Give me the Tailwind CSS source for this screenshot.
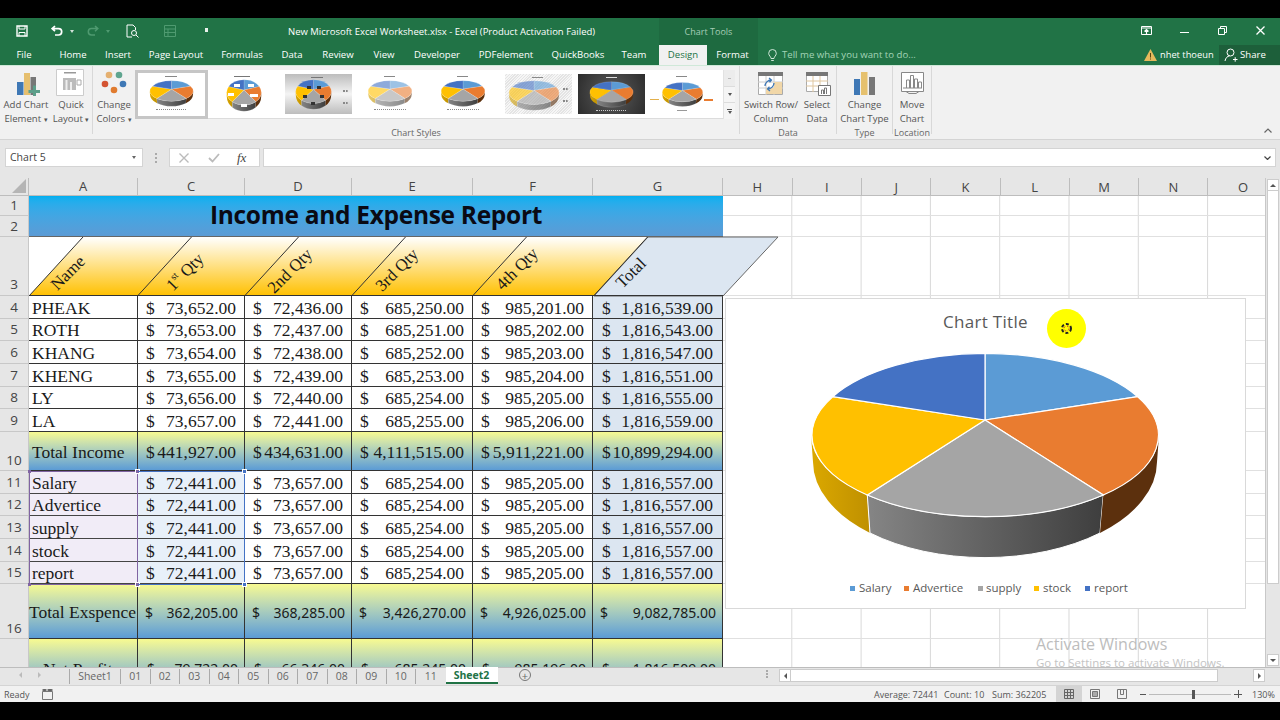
<!DOCTYPE html>
<html lang="en">
<head>
    <meta charset="UTF-8">
    <title>New Microsoft Excel Worksheet.xlsx - Excel</title>
    <script src="https://cdn.jsdelivr.net/npm/@tailwindcss/browser@4"></script>
</head>
<body class="w-[1280px] h-[720px] bg-black overflow-hidden font-['Open_Sans',sans-serif] text-[9.600px] text-[#444]">
    <!-- shared pie drawing, used by the chart and the gallery -->
    <svg class="absolute w-0 h-0">
        <defs>
            <linearGradient id="sideGray" x1="0" x2="1" y1="0" y2="0"><stop offset="0" stop-color="#858585"/><stop offset="1" stop-color="#3e3e3e"/></linearGradient>
            <linearGradient id="sideYellow" x1="0" x2="1" y1="0" y2="0"><stop offset="0" stop-color="#dba800"/><stop offset="1" stop-color="#bf9000"/></linearGradient>
            <linearGradient id="headGold" x1="0" x2="0" y1="0" y2="1"><stop offset="0" stop-color="#ffffff"/><stop offset="1" stop-color="#ffc000"/></linearGradient>
            <g id="pieShape">
                <path fill="url(#sideYellow)" d="M811 435 A174 81.7 0 0 0 867.3 495 L870 533 A172 96 0 0 1 813 462 Z"/>
                <path fill="url(#sideGray)" stroke="#fff" d="M867.3 495 A174 81.7 0 0 0 1103.3 495 L1100 533 A172 96 0 0 1 870 533 Z"/>
                <path fill="#5c300d" d="M1159 435 A174 81.7 0 0 1 1103.3 495 L1100 533 A172 96 0 0 0 1157 462 Z"/>
                <g stroke="#fff" stroke-width="1.2">
                    <path fill="#5b9bd5" d="M985 420 L985 353.3 A174 81.7 0 0 1 1137.7 396.7 Z"/>
                    <path fill="#e97c30" d="M985 420 L1137.7 396.7 A174 81.7 0 0 1 1103.3 495 Z"/>
                    <path fill="#a5a5a5" d="M985 420 L1103.3 495 A174 81.7 0 0 1 867.3 495 Z"/>
                    <path fill="#ffc000" d="M985 420 L867.3 495 A174 81.7 0 0 1 832.7 396.7 Z"/>
                    <path fill="#4472c4" d="M985 420 L832.7 396.7 A174 81.7 0 0 1 985 353.3 Z"/>
                </g>
            </g>
            <symbol id="pie" viewBox="805 348 360 214"><use href="#pieShape"/></symbol>
            <symbol id="pieTall" viewBox="805 348 360 214" preserveAspectRatio="none"><use href="#pieShape"/></symbol>
        </defs>
    </svg>

    <div class="h-[18px]"></div>

    <!-- Title bar -->
    <div class="relative flex items-center h-[27px] bg-[#217346] text-white">
        <svg class="absolute left-[16px] top-[7px] w-[12px] h-[12px]" viewBox="0 0 12 12" fill="none" stroke="#fff" stroke-width="1.4"><path d="M1 1h10v10H1z"/><path d="M3 1v3h6V1M3 11V7.5h6V11" stroke-width="1"/></svg>
        <svg class="absolute left-[51px] top-[7px] w-[12px] h-[12px]" viewBox="0 0 12 12" fill="none" stroke="#fff" stroke-width="1.7"><path d="M4 1 1.2 3.6 4 6.2M1.500 3.600h6a3 3 0 0 1 0 6.400H4"/></svg>
        <span class="absolute left-[70px] top-[12px] border-x-[2.500px] border-t-[3px] border-x-transparent border-t-white/80"></span>
        <svg class="absolute left-[87px] top-[7px] w-[12px] h-[12px]" viewBox="0 0 12 12" fill="none" stroke="#4f9a70" stroke-width="1.5"><path d="M8 1l2.800 2.600L8 6.200M10.500 3.600h-6a3 3 0 0 0 0 6.400H8"/></svg>
        <span class="absolute left-[106px] top-[12px] border-x-[2.500px] border-t-[3px] border-x-transparent border-t-[#4f9a70]"></span>
        <svg class="absolute left-[126px] top-[6px] w-[13px] h-[14px]" viewBox="0 0 13 14" fill="none" stroke="#fff" stroke-width="1"><path d="M1 13V1h6l2.500 2.500V6M1 13h5"/><circle cx="8" cy="9" r="2.500"/><path d="M10 11l2.500 2.500"/></svg>
        <svg class="absolute left-[164px] top-[7px] w-[12px] h-[12px]" viewBox="0 0 12 12" fill="none" stroke="#4f9a70"><path d="M.5.5h11v11H.5zM.5 4h11M.5 7.500h11M4 4v7.500"/></svg>
        <span class="absolute left-[205px] top-[10px] w-[3px] h-[4px] bg-white/90"></span>
        <span class="absolute left-[288px] top-[6px] text-[9.500px] leading-[15px]">New Microsoft Excel Worksheet.xlsx - Excel (Product Activation Failed)</span>
        <div class="absolute left-[659px] top-0 w-[99px] h-[27px] bg-[#1e6a40] text-center text-[9px] leading-[27px] text-[#a6cdb6]">Chart Tools</div>
        <svg class="absolute left-[1141px] top-[7px] w-[11px] h-[11px]" viewBox="0 0 11 11" fill="none" stroke="#fff"><path d="M.5 1.500h10v8H.5zM.5 3h10"/><path d="M5.500 9V4.500M3.500 6.500l2-2 2 2" stroke-width="1.200"/></svg>
        <span class="absolute left-[1180px] top-[14px] w-[9px] h-px bg-white"></span>
        <svg class="absolute left-[1218px] top-[8px] w-[9px] h-[9px]" viewBox="0 0 9 9" fill="none" stroke="#fff"><path d="M.5 2.500h6v6h-6zM2.500 2.500V.5h6v6h-2"/></svg>
        <svg class="absolute left-[1256px] top-[8px] w-[9px] h-[9px]" viewBox="0 0 9 9" fill="none" stroke="#fff" stroke-width="1.300"><path d="M.5.5l8 8M8.500.5l-8 8"/></svg>
    </div>

    <!-- Ribbon tabs -->
    <div class="flex items-stretch h-[20px] bg-[#217346] text-white text-[9.600px] leading-[20px] text-center">
        <div class="w-[48px]">File</div>
        <div class="w-[50px]">Home</div>
        <div class="w-[40px]">Insert</div>
        <div class="w-[76px]">Page Layout</div>
        <div class="w-[56px]">Formulas</div>
        <div class="w-[44px]">Data</div>
        <div class="w-[48px]">Review</div>
        <div class="w-[44px]">View</div>
        <div class="w-[62px]">Developer</div>
        <div class="w-[76px]">PDFelement</div>
        <div class="w-[68px]">QuickBooks</div>
        <div class="w-[44px]">Team</div>
        <div class="w-[3px]"></div>
        <div class="w-[48px] bg-[#f1f1f1] text-[#217346]">Design</div>
        <div class="w-[51px] bg-[#1e6a40]">Format</div>
        <div class="flex items-center w-[386px] pl-[10px] text-[#a3d3b6] text-left">
            <svg class="w-[9px] h-[13px] mr-[5px]" viewBox="0 0 9 13" fill="none" stroke="#cfe6d8"><path d="M3 9.500C3 7.500 .7 6.800.7 4.300a3.800 3.800 0 0 1 7.600 0C8.300 6.800 6 7.500 6 9.500zM3.200 11.500h2.600"/></svg>
            <span>Tell me what you want to do...</span>
        </div>
        <div class="flex items-center w-[75px] text-[9.300px]">
            <svg class="w-[13px] h-[12px] mr-[3px]" viewBox="0 0 13 12"><path fill="#e6b95c" d="M6.500 0 13 12H0z"/><path fill="#5a4410" d="M6 4h1v4.500H6zM6 9.500h1v1H6z"/></svg>
            <span>nhet thoeun</span>
        </div>
        <div class="flex items-center flex-1 pl-[5px] bg-[#1d5f3a]">
            <svg class="w-[14px] h-[14px] mr-[2px]" viewBox="0 0 14 14" fill="none" stroke="#fff"><circle cx="6.500" cy="4.500" r="3.500"/><path d="M1 13c.5-3 2.500-5 4.500-5M9 11.500h4.500M11.200 9.200v4.500"/></svg>
            <span>Share</span>
        </div>
    </div>

    <!-- Ribbon -->
    <div class="relative flex h-[74px] bg-[#f1f1f1] border-t border-[#cfe8d8] text-[9.600px] leading-[13.500px] text-center text-[#555]">
        <div class="relative w-[93px] h-[68px] border-r border-[#d8d8d8]">
            <svg class="absolute left-[16px] top-[6px] w-[24px] h-[24px]" viewBox="0 0 24 24"><path fill="#3f78b5" d="M1 10h6.500v13H1z"/><path fill="#e6bf6e" d="M8 1h6v22H8z"/><path fill="#777" d="M14.500 5H20v18h-5.500z"/><path fill="#5c9f8a" d="M17 13.500h3V18h4.500v3H20v3h-3v-3h-4.500v-3H17z"/></svg>
            <div class="absolute left-0 top-[32px] w-[52px]">Add Chart<br>Element <span class="text-[7px]">▾</span></div>
            <svg class="absolute left-[56px] top-[3px] w-[28px] h-[27px]" viewBox="0 0 28 27"><path fill="#fff" stroke="#ccc" d="M.5.5h27v26H.5z"/><path fill="#999" d="M8 3h12v1.500H8z"/><path fill="#bbb" d="M7 9h13v12H7z"/><path fill="#eee" d="M9.500 11h2v10h-2zM14 13h2v8h-2z"/><path fill="none" stroke="#aaa" d="M21 11h4v5h-4z"/></svg>
            <div class="absolute left-[49px] top-[32px] w-[44px] whitespace-nowrap">Quick<br>Layout <span class="text-[7px]">▾</span></div>
        </div>
        <div class="relative w-[647px] h-[68px] border-r border-[#d8d8d8]">
            <svg class="absolute left-[8px] top-[4px] w-[26px] h-[26px]" viewBox="0 0 26 26"><circle cx="8" cy="5" r="3.300" fill="#e5b070"/><circle cx="18" cy="5" r="3.300" fill="#5fa58f"/><circle cx="4" cy="14" r="3.300" fill="#d45433"/><circle cx="22" cy="14" r="3.300" fill="#3f78b5"/><circle cx="13" cy="20" r="3.300" fill="#e07b2f"/></svg>
            <div class="absolute left-[0px] top-[32px] w-[42px] whitespace-nowrap">Change<br>Colors <span class="text-[7px]">▾</span></div>
            <!-- Gallery -->
            <div class="absolute left-[42px] top-[4px] flex h-[49px] w-[600px] bg-white border-b border-[#dcdcdc]">
                <div class="relative w-[73px] h-[49px] border-[3px] border-[#c6c6c6]">
                    <div class="absolute left-[27px] top-[3px] w-[12px] h-px bg-[#888]"></div>
                    <svg class="absolute left-[11px] top-[7px] w-[45px] h-[27px]"><use href="#pie"/></svg>
                    <div class="absolute left-[18px] top-[36px] w-[30px] h-px border-t border-dotted border-[#888]"></div>
                </div>
                <div class="relative w-[73px] h-[49px]">
                    <div class="absolute left-[26px] top-[6px] w-[16px] h-px bg-[#777]"></div>
                    <svg class="absolute left-[18px] top-[9px] w-[36px] h-[33px]"><use href="#pieTall"/></svg>
                    <div class="absolute left-[26px] top-[14px] w-[6px] h-[3px] bg-white"></div>
                    <div class="absolute left-[40px] top-[14px] w-[6px] h-[3px] bg-white"></div>
                    <div class="absolute left-[42px] top-[24px] w-[8px] h-[3px] bg-white"></div>
                    <div class="absolute left-[20px] top-[23px] w-[6px] h-[3px] bg-white"></div>
                    <div class="absolute left-[33px] top-[34px] w-[6px] h-[3px] bg-white"></div>
                </div>
                <div class="relative w-[67px] h-[40px] mt-[4px] mb-[4px] ml-[4px] mr-[2px] bg-gradient-to-b from-[#bdbdbd] via-[#f4f4f4] to-[#bdbdbd]">
                    <div class="absolute left-[26px] top-[3px] w-[12px] h-px bg-[#777]"></div>
                    <svg class="absolute left-[10px] top-[5px] w-[37px] h-[31px]"><use href="#pieTall"/></svg>
                    <div class="absolute left-[22px] top-[12px] w-[4px] h-[3px] bg-[#333]"></div>
                    <div class="absolute left-[32px] top-[12px] w-[4px] h-[3px] bg-[#333]"></div>
                    <div class="absolute left-[35px] top-[21px] w-[4px] h-[3px] bg-[#333]"></div>
                    <div class="absolute left-[18px] top-[21px] w-[4px] h-[3px] bg-[#333]"></div>
                    <div class="absolute left-[26px] top-[28px] w-[4px] h-[3px] bg-[#333]"></div>
                    <div class="absolute left-[58px] top-[16px] w-[5px] h-[14px] border-y-2 border-dotted border-[#888]"></div>
                </div>
                <div class="relative w-[73px] h-[49px]">
                    <div class="absolute left-[30px] top-[6px] w-[11px] h-px bg-[#888]"></div>
                    <svg class="absolute left-[13px] top-[10px] w-[46px] h-[27px] opacity-60"><use href="#pie"/></svg>
                    <div class="absolute left-[20px] top-[39px] w-[32px] h-px border-t border-dotted border-[#888]"></div>
                </div>
                <div class="relative w-[73px] h-[49px]">
                    <div class="absolute left-[30px] top-[6px] w-[11px] h-px bg-[#888]"></div>
                    <svg class="absolute left-[13px] top-[10px] w-[46px] h-[27px]"><use href="#pie"/></svg>
                    <div class="absolute left-[20px] top-[39px] w-[32px] h-px border-t border-dotted border-[#888]"></div>
                </div>
                <div class="relative w-[67px] h-[40px] mt-[4px] mb-[4px] ml-[5px] mr-[1px] bg-[repeating-linear-gradient(135deg,#f6f6f6_0_1px,#e4e4e4_1px_2px)]">
                    <div class="absolute left-[27px] top-[3px] w-[11px] h-px bg-[#888]"></div>
                    <svg class="absolute left-[3px] top-[6px] w-[52px] h-[31px] opacity-60"><use href="#pie"/></svg>
                    <div class="absolute left-[58px] top-[14px] w-[5px] h-[14px] border-y-2 border-dotted border-[#888]"></div>
                </div>
                <div class="relative w-[67px] h-[40px] mt-[4px] mb-[4px] ml-[5px] mr-[1px] bg-[radial-gradient(circle,#5c5c5c,#2c2c2c)]">
                    <div class="absolute left-[28px] top-[3px] w-[11px] h-px bg-[#ddd]"></div>
                    <svg class="absolute left-[11px] top-[7px] w-[45px] h-[27px]"><use href="#pie"/></svg>
                    <div class="absolute left-[18px] top-[36px] w-[30px] h-px border-t border-dotted border-[#ccc]"></div>
                </div>
                <div class="relative w-[73px] h-[49px]">
                    <div class="absolute left-[30px] top-[6px] w-[11px] h-px bg-[#888]"></div>
                    <svg class="absolute left-[15px] top-[12px] w-[43px] h-[25px]"><use href="#pie"/></svg>
                    <div class="absolute left-[4px] top-[29px] w-[9px] h-px bg-[#e3b04b]"></div>
                    <div class="absolute left-[58px] top-[29px] w-[9px] h-[2px] bg-[#e97c30]"></div>
                    <div class="absolute left-[31px] top-[40px] w-[10px] h-px bg-[#999]"></div>
                </div>
                <div class="flex flex-col ml-auto w-[12px] h-[49px] border-l border-[#e2e2e2] bg-[#f5f5f5] text-[#666]">
                    <div class="h-[17px] border-b border-[#dcdcdc] flex items-center justify-center bg-[#ececec]"><span class="w-[3px] h-px bg-[#bbb]"></span></div>
                    <div class="h-[16px] border-b border-[#dcdcdc] flex items-center justify-center"><span class="border-x-[2.500px] border-t-[3px] border-x-transparent border-t-[#555]"></span></div>
                    <div class="h-[16px] flex flex-col items-center justify-center"><span class="w-[5px] h-px bg-[#555] mb-px"></span><span class="border-x-[2.500px] border-t-[3px] border-x-transparent border-t-[#555]"></span></div>
                </div>
            </div>
            <div class="absolute inset-x-0 top-[60px] text-[9px] leading-[13px] text-[#666]">Chart Styles</div>
        </div>
        <div class="relative w-[97px] h-[68px] border-r border-[#d8d8d8]">
            <svg class="absolute left-[18px] top-[6px] w-[25px] h-[23px]" viewBox="0 0 25 23"><path fill="#fff" stroke="#aaa" d="M.5.5h24v22H.5z"/><path fill="#777" d="M0 0h25v4H0z"/><path stroke="#ccc" fill="none" d="M0 10h25M0 16h25M8 4v19M16 4v19"/><path fill="#f1d7a8" d="M16 10h8v12h-8zM8 16h8v6H8z"/><path fill="none" stroke="#3f78b5" stroke-width="1.300" d="M7 14c0-3 3-6 6-6M11 6l2.500 2-2 2.300M16 11c0 3-3 6-6 6M12 19l-2.500-2 2-2.300"/></svg>
            <div class="absolute left-[1px] top-[32px] w-[60px] whitespace-nowrap">Switch Row/<br>Column</div>
            <svg class="absolute left-[66px] top-[6px] w-[25px] h-[24px]" viewBox="0 0 25 24"><path fill="#fff" stroke="#aaa" d="M.5.5h21v19H.5z"/><path fill="#777" d="M0 0h22v4H0z"/><path stroke="#e0c7a0" fill="none" d="M0 9h22M0 14h22M7 4v16M14 4v16"/><path fill="#fff" stroke="#777" d="M12.500 13.500h12v10h-12z"/><path fill="none" stroke="#777" d="M15.500 22v-4h2v4M18.500 22v-6h2v6"/></svg>
            <div class="absolute left-[62px] top-[32px] w-[30px]">Select<br>Data</div>
            <div class="absolute inset-x-0 top-[60px] text-[9px] leading-[13px] text-[#666]">Data</div>
        </div>
        <div class="relative w-[56px] h-[68px] border-r border-[#d8d8d8]">
            <svg class="absolute left-[17px] top-[6px] w-[21px] h-[23px]" viewBox="0 0 21 23"><path fill="#3f78b5" d="M0 7h6v16H0z"/><path fill="#e6c16e" d="M7 0h6.500v23H7z"/><path fill="#777" d="M15 5h6v18h-6z"/></svg>
            <div class="absolute inset-x-0 top-[32px] whitespace-nowrap">Change<br>Chart Type</div>
            <div class="absolute inset-x-0 top-[60px] text-[9px] leading-[13px] text-[#666]">Type</div>
        </div>
        <div class="relative w-[39px] h-[68px] border-r border-[#d8d8d8]">
            <svg class="absolute left-[8px] top-[6px] w-[23px] h-[22px]" viewBox="0 0 23 22" fill="none" stroke="#888"><path fill="#fff" d="M.5.5h22v19H.5z"/><path d="M5.500 16V8h3v8M9.500 16V3.500h3V16M13.500 16V7h3v9M17.500 16v-6h3v6M2 16h19M5 19.500l3 2h7l3-2"/></svg>
            <div class="absolute inset-x-0 top-[32px]">Move<br>Chart</div>
            <div class="absolute inset-x-0 top-[60px] text-[9px] leading-[13px] text-[#666]">Location</div>
        </div>
        <svg class="absolute left-[1264px] top-[62px] w-[8px] h-[5px]" viewBox="0 0 8 5" fill="none" stroke="#666" stroke-width="1.200"><path d="M.5 4.500 4 1l3.500 3.500"/></svg>
    </div>

    <!-- Formula bar -->
    <div class="flex items-start h-[39px] pt-[8px] bg-[#e6e6e6] border-t border-[#d4d4d4]">
        <div class="flex items-center justify-between w-[138px] h-[19px] ml-[5px] px-[4px] bg-white border border-[#d4d4d4] text-[10.500px] text-[#444]">
            <span>Chart 5</span>
            <span class="mr-[2px] border-x-[2.500px] border-t-[3px] border-x-transparent border-t-[#666]"></span>
        </div>
        <div class="flex flex-col gap-[2px] mx-[12px] mt-[5px]"><span class="w-[2px] h-[2px] bg-[#aaa]"></span><span class="w-[2px] h-[2px] bg-[#aaa]"></span><span class="w-[2px] h-[2px] bg-[#aaa]"></span></div>
        <div class="flex items-center w-[91px] h-[19px] bg-white border border-[#d4d4d4] ml-[0px]">
            <svg class="w-[10px] h-[10px] ml-[9px]" viewBox="0 0 10 10" fill="none" stroke="#bbb" stroke-width="1.400"><path d="M.5.5l9 9M9.500.5l-9 9"/></svg>
            <svg class="w-[12px] h-[10px] ml-[19px]" viewBox="0 0 12 10" fill="none" stroke="#bbb" stroke-width="1.800"><path d="M1 5l3.500 3.500L11 1"/></svg>
            <span class="ml-[17px] font-['Liberation_Serif',serif] italic text-[13px] text-[#444]">fx</span>
        </div>
        <div class="flex items-center justify-end flex-1 h-[19px] ml-[3px] mr-[4px] bg-white border border-[#d4d4d4]">
            <svg class="w-[7px] h-[4px] mr-[4px]" viewBox="0 0 7 4" fill="none" stroke="#444" stroke-width="1.200"><path d="M.5.5 3.500 3.500 6.500.5"/></svg>
        </div>
    </div>

    <!-- Sheet area -->
    <div class="relative flex h-[489px] overflow-hidden bg-white">
        <div class="grid w-[1265px] h-[489px] grid-cols-[29px_109px_107px_107px_121px_120px_130px_542px] grid-rows-[18px_20px_21px_59px_repeat(6,22.670px)_39px_repeat(5,22.700px)_54.500px_54.500px] font-['Liberation_Serif',serif] text-[17.500px] text-[#1a1a1a]">
            <!-- column headers -->
            <div class="relative bg-[#e6e6e6] border-r border-b border-[#bdbdbd]"><span class="absolute right-[2px] bottom-[2px] w-0 h-0 border-l-[14px] border-t-[14px] border-l-transparent border-t-transparent border-b-0 border-r-[14px] border-r-[#b5b5b5]"></span></div>
            <div class="flex items-center justify-center bg-[#e6e6e6] border-r border-b border-[#bdbdbd] font-['Open_Sans',sans-serif] text-[13px] text-[#444]">A</div>
            <div class="flex items-center justify-center bg-[#e6e6e6] border-r border-b border-[#bdbdbd] font-['Open_Sans',sans-serif] text-[13px] text-[#444]">C</div>
            <div class="flex items-center justify-center bg-[#e6e6e6] border-r border-b border-[#bdbdbd] font-['Open_Sans',sans-serif] text-[13px] text-[#444]">D</div>
            <div class="flex items-center justify-center bg-[#e6e6e6] border-r border-b border-[#bdbdbd] font-['Open_Sans',sans-serif] text-[13px] text-[#444]">E</div>
            <div class="flex items-center justify-center bg-[#e6e6e6] border-r border-b border-[#bdbdbd] font-['Open_Sans',sans-serif] text-[13px] text-[#444]">F</div>
            <div class="flex items-center justify-center bg-[#e6e6e6] border-r border-b border-[#bdbdbd] font-['Open_Sans',sans-serif] text-[13px] text-[#444]">G</div>
            <div class="flex overflow-hidden bg-[#e6e6e6] border-b border-[#bdbdbd] font-['Open_Sans',sans-serif] text-[13px] leading-[18px] text-[#444] text-center">
                <span class="shrink-0 w-[69.700px] border-r border-[#bdbdbd]">H</span>
                <span class="shrink-0 w-[69.300px] border-r border-[#bdbdbd]">I</span>
                <span class="shrink-0 w-[69.300px] border-r border-[#bdbdbd]">J</span>
                <span class="shrink-0 w-[69.300px] border-r border-[#bdbdbd]">K</span>
                <span class="shrink-0 w-[69.300px] border-r border-[#bdbdbd]">L</span>
                <span class="shrink-0 w-[69.300px] border-r border-[#bdbdbd]">M</span>
                <span class="shrink-0 w-[69.300px] border-r border-[#bdbdbd]">N</span>
                <span class="shrink-0 w-[69.300px]">O</span>
            </div>

            <!-- empty cells to the right of the table -->
            <div class="col-start-8 row-start-2 row-[span_17/span_17] grid grid-rows-subgrid bg-[linear-gradient(90deg,transparent_68.300px,#d8d8d8_68.300px)] bg-size-[69.300px_100%]">
                <div class="border-b border-[#e0e0e0]"></div><div class="border-b border-[#e0e0e0]"></div><div class="border-b border-[#e0e0e0]"></div>
                <div class="border-b border-[#e0e0e0]"></div><div class="border-b border-[#e0e0e0]"></div><div class="border-b border-[#e0e0e0]"></div>
                <div class="border-b border-[#e0e0e0]"></div><div class="border-b border-[#e0e0e0]"></div><div class="border-b border-[#e0e0e0]"></div>
                <div class="border-b border-[#e0e0e0]"></div><div class="border-b border-[#e0e0e0]"></div><div class="border-b border-[#e0e0e0]"></div>
                <div class="border-b border-[#e0e0e0]"></div><div class="border-b border-[#e0e0e0]"></div><div class="border-b border-[#e0e0e0]"></div>
                <div class="border-b border-[#e0e0e0]"></div><div class="border-b border-[#e0e0e0]"></div>
            </div>

            <!-- rows 1-2 -->
            <div class="flex items-center justify-center bg-[#e6e6e6] border-r border-b border-[#c8c8c8] font-['Open_Sans',sans-serif] text-[13.500px] text-[#444]">1</div>
            <div class="col-span-6 row-span-2 flex items-center justify-center pb-[1px] bg-gradient-to-b from-[#00b0f0] to-[#5b9bd5] border-b border-[#666] font-['Open_Sans',sans-serif] font-bold text-[24.500px] text-[#0a0a14] tracking-[-0.3px]">Income and Expense Report</div>
            <div class="flex items-center justify-center bg-[#e6e6e6] border-r border-b border-[#c8c8c8] font-['Open_Sans',sans-serif] text-[13.500px] text-[#444]">2</div>

            <!-- row 3, slanted headers -->
            <div class="flex items-end justify-center pb-[1px] bg-[#e6e6e6] border-r border-b border-[#c8c8c8] font-['Open_Sans',sans-serif] text-[13.500px] text-[#444]">3</div>
            <div class="relative z-10 col-span-6">
                <svg class="block overflow-visible" width="694" height="59" viewBox="0 0 694 59">
                    <path fill="url(#headGold)" d="M0 59 54 0H619L565 59Z"/>
                    <path fill="#dce6f1" stroke="#666" d="M565 59 619 0H749L694 59Z"/>
                    <path fill="none" stroke="#333" d="M0 59 54 0M108.500 59 162.500 0M215.500 59 269.500 0M322.500 59 376.500 0M443.500 59 497.500 0M564.500 59 618.500 0M0 58.500H694"/>
                    <g font-size="17" fill="#1a1a1a" text-anchor="middle" dominant-baseline="middle">
                        <text transform="translate(40 37) rotate(-45)">Name</text>
                        <text transform="translate(157 36) rotate(-45)">1<tspan font-size="10" dy="-5">st</tspan><tspan dy="5"> Qty</tspan></text>
                        <text transform="translate(262 35) rotate(-45)">2nd Qty</text>
                        <text transform="translate(369 34) rotate(-45)">3rd Qty</text>
                        <text transform="translate(489 33) rotate(-45)">4th Qty</text>
                        <text transform="translate(603 37) rotate(-45)">Total</text>
                    </g>
                </svg>
            </div>

            <!-- rows 4-9 -->
            <div class="flex items-center justify-center bg-[#e6e6e6] border-r border-b border-[#c8c8c8] font-['Open_Sans',sans-serif] text-[13.500px] text-[#444]">4</div>
            <div class="flex items-center pl-[3px] pt-[2px] border-r border-b border-[#333]">PHEAK</div>
            <div class="flex items-center justify-between px-[8px] pt-[2px] border-r border-b border-[#333]"><span>$</span><span>73,652.00</span></div>
            <div class="flex items-center justify-between px-[8px] pt-[2px] border-r border-b border-[#333]"><span>$</span><span>72,436.00</span></div>
            <div class="flex items-center justify-between px-[8px] pt-[2px] border-r border-b border-[#333]"><span>$</span><span>685,250.00</span></div>
            <div class="flex items-center justify-between px-[8px] pt-[2px] border-r border-b border-[#333]"><span>$</span><span>985,201.00</span></div>
            <div class="flex items-center justify-between px-[9px] pt-[2px] bg-[#dce6f1] border-r border-b border-[#333]"><span>$</span><span>1,816,539.00</span></div>

            <div class="flex items-center justify-center bg-[#e6e6e6] border-r border-b border-[#c8c8c8] font-['Open_Sans',sans-serif] text-[13.500px] text-[#444]">5</div>
            <div class="flex items-center pl-[3px] pt-[2px] border-r border-b border-[#333]">ROTH</div>
            <div class="flex items-center justify-between px-[8px] pt-[2px] border-r border-b border-[#333]"><span>$</span><span>73,653.00</span></div>
            <div class="flex items-center justify-between px-[8px] pt-[2px] border-r border-b border-[#333]"><span>$</span><span>72,437.00</span></div>
            <div class="flex items-center justify-between px-[8px] pt-[2px] border-r border-b border-[#333]"><span>$</span><span>685,251.00</span></div>
            <div class="flex items-center justify-between px-[8px] pt-[2px] border-r border-b border-[#333]"><span>$</span><span>985,202.00</span></div>
            <div class="flex items-center justify-between px-[9px] pt-[2px] bg-[#dce6f1] border-r border-b border-[#333]"><span>$</span><span>1,816,543.00</span></div>

            <div class="flex items-center justify-center bg-[#e6e6e6] border-r border-b border-[#c8c8c8] font-['Open_Sans',sans-serif] text-[13.500px] text-[#444]">6</div>
            <div class="flex items-center pl-[3px] pt-[2px] border-r border-b border-[#333]">KHANG</div>
            <div class="flex items-center justify-between px-[8px] pt-[2px] border-r border-b border-[#333]"><span>$</span><span>73,654.00</span></div>
            <div class="flex items-center justify-between px-[8px] pt-[2px] border-r border-b border-[#333]"><span>$</span><span>72,438.00</span></div>
            <div class="flex items-center justify-between px-[8px] pt-[2px] border-r border-b border-[#333]"><span>$</span><span>685,252.00</span></div>
            <div class="flex items-center justify-between px-[8px] pt-[2px] border-r border-b border-[#333]"><span>$</span><span>985,203.00</span></div>
            <div class="flex items-center justify-between px-[9px] pt-[2px] bg-[#dce6f1] border-r border-b border-[#333]"><span>$</span><span>1,816,547.00</span></div>

            <div class="flex items-center justify-center bg-[#e6e6e6] border-r border-b border-[#c8c8c8] font-['Open_Sans',sans-serif] text-[13.500px] text-[#444]">7</div>
            <div class="flex items-center pl-[3px] pt-[2px] border-r border-b border-[#333]">KHENG</div>
            <div class="flex items-center justify-between px-[8px] pt-[2px] border-r border-b border-[#333]"><span>$</span><span>73,655.00</span></div>
            <div class="flex items-center justify-between px-[8px] pt-[2px] border-r border-b border-[#333]"><span>$</span><span>72,439.00</span></div>
            <div class="flex items-center justify-between px-[8px] pt-[2px] border-r border-b border-[#333]"><span>$</span><span>685,253.00</span></div>
            <div class="flex items-center justify-between px-[8px] pt-[2px] border-r border-b border-[#333]"><span>$</span><span>985,204.00</span></div>
            <div class="flex items-center justify-between px-[9px] pt-[2px] bg-[#dce6f1] border-r border-b border-[#333]"><span>$</span><span>1,816,551.00</span></div>

            <div class="flex items-center justify-center bg-[#e6e6e6] border-r border-b border-[#c8c8c8] font-['Open_Sans',sans-serif] text-[13.500px] text-[#444]">8</div>
            <div class="flex items-center pl-[3px] pt-[2px] border-r border-b border-[#333]">LY</div>
            <div class="flex items-center justify-between px-[8px] pt-[2px] border-r border-b border-[#333]"><span>$</span><span>73,656.00</span></div>
            <div class="flex items-center justify-between px-[8px] pt-[2px] border-r border-b border-[#333]"><span>$</span><span>72,440.00</span></div>
            <div class="flex items-center justify-between px-[8px] pt-[2px] border-r border-b border-[#333]"><span>$</span><span>685,254.00</span></div>
            <div class="flex items-center justify-between px-[8px] pt-[2px] border-r border-b border-[#333]"><span>$</span><span>985,205.00</span></div>
            <div class="flex items-center justify-between px-[9px] pt-[2px] bg-[#dce6f1] border-r border-b border-[#333]"><span>$</span><span>1,816,555.00</span></div>

            <div class="flex items-center justify-center bg-[#e6e6e6] border-r border-b border-[#c8c8c8] font-['Open_Sans',sans-serif] text-[13.500px] text-[#444]">9</div>
            <div class="flex items-center pl-[3px] pt-[2px] border-r border-b border-[#333]">LA</div>
            <div class="flex items-center justify-between px-[8px] pt-[2px] border-r border-b border-[#333]"><span>$</span><span>73,657.00</span></div>
            <div class="flex items-center justify-between px-[8px] pt-[2px] border-r border-b border-[#333]"><span>$</span><span>72,441.00</span></div>
            <div class="flex items-center justify-between px-[8px] pt-[2px] border-r border-b border-[#333]"><span>$</span><span>685,255.00</span></div>
            <div class="flex items-center justify-between px-[8px] pt-[2px] border-r border-b border-[#333]"><span>$</span><span>985,206.00</span></div>
            <div class="flex items-center justify-between px-[9px] pt-[2px] bg-[#dce6f1] border-r border-b border-[#333]"><span>$</span><span>1,816,559.00</span></div>

            <!-- row 10 -->
            <div class="flex items-end justify-center bg-[#e6e6e6] border-r border-b border-[#c8c8c8] font-['Open_Sans',sans-serif] text-[13.500px] text-[#444]">10</div>
            <div class="flex items-center pl-[3px] pt-[2px] bg-gradient-to-b from-[#f8fa90] to-[#5b9bd5] border-r border-b border-[#333]">Total Income</div>
            <div class="flex items-center justify-between px-[8px] pt-[2px] bg-gradient-to-b from-[#f8fa90] to-[#5b9bd5] border-r border-b border-[#333]"><span>$</span><span>441,927.00</span></div>
            <div class="flex items-center justify-between px-[8px] pt-[2px] bg-gradient-to-b from-[#f8fa90] to-[#5b9bd5] border-r border-b border-[#333]"><span>$</span><span>434,631.00</span></div>
            <div class="flex items-center justify-between px-[8px] pt-[2px] bg-gradient-to-b from-[#f8fa90] to-[#5b9bd5] border-r border-b border-[#333]"><span>$</span><span>4,111,515.00</span></div>
            <div class="flex items-center justify-between px-[8px] pt-[2px] bg-gradient-to-b from-[#f8fa90] to-[#5b9bd5] border-r border-b border-[#333]"><span>$</span><span>5,911,221.00</span></div>
            <div class="flex items-center justify-between px-[9px] pt-[2px] bg-gradient-to-b from-[#f8fa90] to-[#5b9bd5] border-r border-b border-[#333]"><span>$</span><span>10,899,294.00</span></div>

            <!-- rows 11-15 -->
            <div class="flex items-center justify-center bg-[#e6e6e6] border-r border-b border-[#c8c8c8] font-['Open_Sans',sans-serif] text-[13.500px] text-[#444]">11</div>
            <div class="flex items-center pl-[3px] pt-[2px] bg-[#f1ecf7] border-r border-b border-[#444]">Salary</div>
            <div class="flex items-center justify-between px-[8px] pt-[2px] bg-[#e8f0f9] border-r border-b border-[#444]"><span>$</span><span>72,441.00</span></div>
            <div class="flex items-center justify-between px-[8px] pt-[2px] border-r border-b border-[#333]"><span>$</span><span>73,657.00</span></div>
            <div class="flex items-center justify-between px-[8px] pt-[2px] border-r border-b border-[#333]"><span>$</span><span>685,254.00</span></div>
            <div class="flex items-center justify-between px-[8px] pt-[2px] border-r border-b border-[#333]"><span>$</span><span>985,205.00</span></div>
            <div class="flex items-center justify-between px-[9px] pt-[2px] bg-[#dce6f1] border-r border-b border-[#333]"><span>$</span><span>1,816,557.00</span></div>

            <div class="flex items-center justify-center bg-[#e6e6e6] border-r border-b border-[#c8c8c8] font-['Open_Sans',sans-serif] text-[13.500px] text-[#444]">12</div>
            <div class="flex items-center pl-[3px] pt-[2px] bg-[#f1ecf7] border-r border-b border-[#444]">Advertice</div>
            <div class="flex items-center justify-between px-[8px] pt-[2px] bg-[#e8f0f9] border-r border-b border-[#444]"><span>$</span><span>72,441.00</span></div>
            <div class="flex items-center justify-between px-[8px] pt-[2px] border-r border-b border-[#333]"><span>$</span><span>73,657.00</span></div>
            <div class="flex items-center justify-between px-[8px] pt-[2px] border-r border-b border-[#333]"><span>$</span><span>685,254.00</span></div>
            <div class="flex items-center justify-between px-[8px] pt-[2px] border-r border-b border-[#333]"><span>$</span><span>985,205.00</span></div>
            <div class="flex items-center justify-between px-[9px] pt-[2px] bg-[#dce6f1] border-r border-b border-[#333]"><span>$</span><span>1,816,557.00</span></div>

            <div class="flex items-center justify-center bg-[#e6e6e6] border-r border-b border-[#c8c8c8] font-['Open_Sans',sans-serif] text-[13.500px] text-[#444]">13</div>
            <div class="flex items-center pl-[3px] pt-[2px] bg-[#f1ecf7] border-r border-b border-[#444]">supply</div>
            <div class="flex items-center justify-between px-[8px] pt-[2px] bg-[#e8f0f9] border-r border-b border-[#444]"><span>$</span><span>72,441.00</span></div>
            <div class="flex items-center justify-between px-[8px] pt-[2px] border-r border-b border-[#333]"><span>$</span><span>73,657.00</span></div>
            <div class="flex items-center justify-between px-[8px] pt-[2px] border-r border-b border-[#333]"><span>$</span><span>685,254.00</span></div>
            <div class="flex items-center justify-between px-[8px] pt-[2px] border-r border-b border-[#333]"><span>$</span><span>985,205.00</span></div>
            <div class="flex items-center justify-between px-[9px] pt-[2px] bg-[#dce6f1] border-r border-b border-[#333]"><span>$</span><span>1,816,557.00</span></div>

            <div class="flex items-center justify-center bg-[#e6e6e6] border-r border-b border-[#c8c8c8] font-['Open_Sans',sans-serif] text-[13.500px] text-[#444]">14</div>
            <div class="flex items-center pl-[3px] pt-[2px] bg-[#f1ecf7] border-r border-b border-[#444]">stock</div>
            <div class="flex items-center justify-between px-[8px] pt-[2px] bg-[#e8f0f9] border-r border-b border-[#444]"><span>$</span><span>72,441.00</span></div>
            <div class="flex items-center justify-between px-[8px] pt-[2px] border-r border-b border-[#333]"><span>$</span><span>73,657.00</span></div>
            <div class="flex items-center justify-between px-[8px] pt-[2px] border-r border-b border-[#333]"><span>$</span><span>685,254.00</span></div>
            <div class="flex items-center justify-between px-[8px] pt-[2px] border-r border-b border-[#333]"><span>$</span><span>985,205.00</span></div>
            <div class="flex items-center justify-between px-[9px] pt-[2px] bg-[#dce6f1] border-r border-b border-[#333]"><span>$</span><span>1,816,557.00</span></div>

            <div class="flex items-center justify-center bg-[#e6e6e6] border-r border-b border-[#c8c8c8] font-['Open_Sans',sans-serif] text-[13.500px] text-[#444]">15</div>
            <div class="flex items-center pl-[3px] pt-[2px] bg-[#f1ecf7] border-r border-b border-[#444]">report</div>
            <div class="flex items-center justify-between px-[8px] pt-[2px] bg-[#e8f0f9] border-r border-b border-[#444]"><span>$</span><span>72,441.00</span></div>
            <div class="flex items-center justify-between px-[8px] pt-[2px] border-r border-b border-[#333]"><span>$</span><span>73,657.00</span></div>
            <div class="flex items-center justify-between px-[8px] pt-[2px] border-r border-b border-[#333]"><span>$</span><span>685,254.00</span></div>
            <div class="flex items-center justify-between px-[8px] pt-[2px] border-r border-b border-[#333]"><span>$</span><span>985,205.00</span></div>
            <div class="flex items-center justify-between px-[9px] pt-[2px] bg-[#dce6f1] border-r border-b border-[#333]"><span>$</span><span>1,816,557.00</span></div>

            <!-- row 16 -->
            <div class="flex items-end justify-center bg-[#e6e6e6] border-r border-b border-[#c8c8c8] font-['Open_Sans',sans-serif] text-[13.500px] text-[#444]">16</div>
            <div class="flex items-center pt-[2px] whitespace-nowrap bg-gradient-to-b from-[#f8fa90] to-[#5b9bd5] border-r border-b border-[#333]">Total Exspence</div>
            <div class="flex items-center justify-between pl-[7px] pr-[6px] pt-[2px] bg-gradient-to-b from-[#f8fa90] to-[#5b9bd5] border-r border-b border-[#333] font-['Noto_Sans',sans-serif] text-[14px]"><span>$</span><span>362,205.00</span></div>
            <div class="flex items-center justify-between pl-[7px] pr-[6px] pt-[2px] bg-gradient-to-b from-[#f8fa90] to-[#5b9bd5] border-r border-b border-[#333] font-['Noto_Sans',sans-serif] text-[14px]"><span>$</span><span>368,285.00</span></div>
            <div class="flex items-center justify-between pl-[7px] pr-[6px] pt-[2px] bg-gradient-to-b from-[#f8fa90] to-[#5b9bd5] border-r border-b border-[#333] font-['Noto_Sans',sans-serif] text-[14px]"><span>$</span><span>3,426,270.00</span></div>
            <div class="flex items-center justify-between pl-[7px] pr-[6px] pt-[2px] bg-gradient-to-b from-[#f8fa90] to-[#5b9bd5] border-r border-b border-[#333] font-['Noto_Sans',sans-serif] text-[14px]"><span>$</span><span>4,926,025.00</span></div>
            <div class="flex items-center justify-between pl-[7px] pr-[6px] pt-[2px] bg-gradient-to-b from-[#f8fa90] to-[#5b9bd5] border-r border-b border-[#333] font-['Noto_Sans',sans-serif] text-[14px]"><span>$</span><span>9,082,785.00</span></div>

            <!-- row 17, cut off by the tab bar -->
            <div class="bg-[#e6e6e6] border-r border-[#c8c8c8]"></div>
            <div class="flex items-center pl-[14px] pt-[6px] bg-gradient-to-b from-[#f8fa90] to-[#5b9bd5] border-r border-b border-[#333]">Net Profit</div>
            <div class="flex items-center justify-between pl-[9px] pr-[6px] pt-[6px] bg-gradient-to-b from-[#f8fa90] to-[#5b9bd5] border-r border-b border-[#333] font-['Noto_Sans',sans-serif] text-[14px]"><span>$</span><span>79,722.00</span></div>
            <div class="flex items-center justify-between pl-[9px] pr-[6px] pt-[6px] bg-gradient-to-b from-[#f8fa90] to-[#5b9bd5] border-r border-b border-[#333] font-['Noto_Sans',sans-serif] text-[14px]"><span>$</span><span>66,346.00</span></div>
            <div class="flex items-center justify-between pl-[9px] pr-[6px] pt-[6px] bg-gradient-to-b from-[#f8fa90] to-[#5b9bd5] border-r border-b border-[#333] font-['Noto_Sans',sans-serif] text-[14px]"><span>$</span><span>685,245.00</span></div>
            <div class="flex items-center justify-between pl-[9px] pr-[6px] pt-[6px] bg-gradient-to-b from-[#f8fa90] to-[#5b9bd5] border-r border-b border-[#333] font-['Noto_Sans',sans-serif] text-[14px]"><span>$</span><span>985,196.00</span></div>
            <div class="flex items-center justify-between pl-[9px] pr-[6px] pt-[6px] bg-gradient-to-b from-[#f8fa90] to-[#5b9bd5] border-r border-b border-[#333] font-['Noto_Sans',sans-serif] text-[14px]"><span>$</span><span>1,816,509.00</span></div>
        </div>

        <!-- vertical scrollbar -->
        <div class="flex flex-col w-[15px] h-[489px] pl-px bg-[#e6e6e6] border-l border-[#c8c8c8]">
            <div class="flex items-center justify-center w-[12px] h-[12px] mt-[1px] bg-white border border-[#ccc]"><span class="border-x-[3px] border-b-[3px] border-x-transparent border-b-[#555]"></span></div>
            <div class="w-[12px] h-[393px] bg-white border-x border-b border-[#ccc]"></div>
            <div class="flex items-center justify-center w-[12px] h-[12px] mt-auto mb-[1px] bg-white border border-[#ccc]"><span class="border-x-[3px] border-t-[3px] border-x-transparent border-t-[#555]"></span></div>
        </div>

        <!-- selection of A11:A15 and C11:C15 -->
        <div class="absolute left-[29px] top-[293px] w-[109px] h-[114px] border-[1.500px] border-[#8064a2]">
            <span class="absolute -left-[2px] -top-[2px] w-[3px] h-[3px] bg-[#8064a2]"></span>
            <span class="absolute -left-[2px] -bottom-[2px] w-[3px] h-[3px] bg-[#8064a2]"></span>
            <span class="absolute -right-[3px] -top-[3px] w-[5px] h-[5px] bg-[#8064a2] border border-white"></span>
            <span class="absolute -right-[3px] -bottom-[3px] w-[5px] h-[5px] bg-[#8064a2] border border-white"></span>
        </div>
        <div class="absolute left-[138px] top-[293px] w-[107px] h-[114px] border-[1.500px] border-l-0 border-[#4472c4]">
            <span class="absolute -right-[3px] -top-[3px] w-[5px] h-[5px] bg-[#4472c4] border border-white"></span>
            <span class="absolute -right-[3px] -bottom-[3px] w-[5px] h-[5px] bg-[#4472c4] border border-white"></span>
        </div>

        <!-- Pie chart -->
        <div class="absolute left-[725px] top-[120px] flex flex-col items-center w-[521px] h-[311px] bg-white border border-[#d9d9d9] text-[#595959]">
            <div class="mt-[11px] text-[17px] tracking-[0.3px] leading-[24px]">Chart Title</div>
            <svg class="absolute left-[79px] top-[49px] w-[360px] h-[214px]"><use href="#pie"/></svg>
            <div class="absolute top-[281px] left-[124px] flex items-center text-[11.500px] leading-[16px]">
                <span class="w-[5px] h-[5px] mr-[4px] bg-[#5b9bd5]"></span><span class="w-[32px] mr-[13px]">Salary</span>
                <span class="w-[5px] h-[5px] mr-[4px] bg-[#e97c30]"></span><span class="w-[50px] mr-[15px]">Advertice</span>
                <span class="w-[5px] h-[5px] mr-[3px] bg-[#a5a5a5]"></span><span class="w-[35px] mr-[13px]">supply</span>
                <span class="w-[5px] h-[5px] mr-[4px] bg-[#ffc000]"></span><span class="w-[28px] mr-[14px]">stock</span>
                <span class="w-[5px] h-[5px] mr-[4px] bg-[#4472c4]"></span><span>report</span>
            </div>
        </div>

        <!-- cursor highlight -->
        <div class="absolute left-[1047px] top-[131px] flex items-center justify-center w-[39px] h-[39px] rounded-full bg-[#ffff00]">
            <svg class="w-[13px] h-[13px]" viewBox="0 0 13 13" fill="none" stroke-width="2"><circle cx="6.500" cy="6.500" r="4.500" stroke="#222" stroke-dasharray="3 2"/><circle cx="6.500" cy="6.500" r="2.500" stroke="#c8372d" stroke-width="1" stroke-dasharray="2 2"/></svg>
        </div>

        <!-- watermark -->
        <div class="absolute left-[1036px] top-[455px] text-[16px] leading-[22px] text-[#bdbdbd]">Activate Windows</div>
        <div class="absolute left-[1036px] top-[478px] text-[11.500px] leading-[14px] whitespace-nowrap text-[#c4c4c4]">Go to Settings to activate Windows.</div>
    </div>

    <!-- Sheet tabs -->
    <div class="relative flex items-stretch h-[18px] bg-[#e6e6e6] border-t border-[#bdbdbd] text-[10.500px] leading-[14px] text-center text-[#666]">
        <div class="w-[69px] relative">
            <span class="absolute left-[19px] top-[4px] border-y-[3px] border-r-[3px] border-y-transparent border-r-[#bbb]"></span>
            <span class="absolute left-[38px] top-[4px] border-y-[3px] border-l-[3px] border-y-transparent border-l-[#bbb]"></span>
        </div>
        <div class="w-[52px] my-[1px] border-x border-[#aaa]">Sheet1</div>
        <div class="w-[29.500px] my-[1px] border-r border-[#aaa]">01</div>
        <div class="w-[29.500px] my-[1px] border-r border-[#aaa]">02</div>
        <div class="w-[29.500px] my-[1px] border-r border-[#aaa]">03</div>
        <div class="w-[29.500px] my-[1px] border-r border-[#aaa]">04</div>
        <div class="w-[29.500px] my-[1px] border-r border-[#aaa]">05</div>
        <div class="w-[29.500px] my-[1px] border-r border-[#aaa]">06</div>
        <div class="w-[29.500px] my-[1px] border-r border-[#aaa]">07</div>
        <div class="w-[29.500px] my-[1px] border-r border-[#aaa]">08</div>
        <div class="w-[29.500px] my-[1px] border-r border-[#aaa]">09</div>
        <div class="w-[29.500px] my-[1px] border-r border-[#aaa]">10</div>
        <div class="w-[29.500px] my-[1px]">11</div>
        <div class="w-[52px] h-[17px] -mt-px pt-[1px] bg-white border-b-2 border-[#217346] font-bold text-[#217346]">Sheet2</div>
        <div class="absolute left-[519px] top-[1px] flex items-center justify-center w-[12px] h-[12px] rounded-full border border-[#777] text-[11px] leading-none text-[#666]">+</div>
        <div class="absolute left-[766px] top-[2px] flex flex-col gap-[1px]"><span class="w-[2px] h-[2px] bg-[#aaa]"></span><span class="w-[2px] h-[2px] bg-[#aaa]"></span><span class="w-[2px] h-[2px] bg-[#aaa]"></span></div>
        <div class="absolute left-[779px] top-[1px] flex items-stretch w-[486px] h-[13px]">
            <div class="flex items-center justify-center w-[12px] bg-white border border-[#ccc]"><span class="border-y-[3px] border-r-[3px] border-y-transparent border-r-[#555]"></span></div>
            <div class="w-[427px] bg-white border-y border-r border-[#ccc]"></div>
            <div class="flex-1"></div>
            <div class="flex items-center justify-center w-[12px] bg-white border border-[#ccc]"><span class="border-y-[3px] border-l-[3px] border-y-transparent border-l-[#555]"></span></div>
        </div>
    </div>

    <!-- Status bar -->
    <div class="relative h-[17px] bg-[#f1f1f1] border-t border-[#d4d4d4] text-[9px] leading-[17px] text-[#555]">
        <span class="absolute left-[4px] top-0">Ready</span>
        <svg class="absolute left-[42px] top-[3px] w-[11px] h-[11px]" viewBox="0 0 11 11" fill="none" stroke="#777"><path d="M.5 2.500h10v8H.5z"/><path fill="#555" d="M1 0h3v2H1zM6 0h4v2H6z"/></svg>
        <span class="absolute left-[874px] top-0">Average: 72441</span>
        <span class="absolute left-[944px] top-0">Count: 10</span>
        <span class="absolute left-[992px] top-0">Sum: 362205</span>
        <div class="absolute left-[1056px] top-0 flex items-center justify-center w-[26px] h-[16px] bg-[#d4d4d4]">
            <svg class="w-[10px] h-[10px]" viewBox="0 0 10 10" fill="none" stroke="#666"><path d="M.5.5h9v9h-9zM.5 3.500h9M.5 6.500h9M3.500.5v9M6.500.5v9"/></svg>
        </div>
        <svg class="absolute left-[1090px] top-[3px] w-[10px] h-[10px]" viewBox="0 0 10 10" fill="none" stroke="#777"><path d="M.5.5h9v9h-9z"/><path fill="#aaa" d="M2.500 2.500h5v5h-5z"/></svg>
        <svg class="absolute left-[1117px] top-[3px] w-[10px] h-[10px]" viewBox="0 0 10 10" fill="none" stroke="#777"><path d="M.5.5h9v9h-9zM3.500.5v5h3v-5"/></svg>
        <span class="absolute left-[1140px] top-[8px] w-[6px] h-px bg-[#555]"></span>
        <span class="absolute left-[1149px] top-[8px] w-[82px] h-px bg-[#bbb]"></span>
        <span class="absolute left-[1192px] top-[4px] w-[3px] h-[9px] bg-[#555]"></span>
        <span class="absolute left-[1234px] top-[8px] w-[8px] h-px bg-[#555]"></span>
        <span class="absolute left-[1238px] top-[4px] w-px h-[8px] bg-[#555]"></span>
        <span class="absolute left-[1252px] top-0">130%</span>
    </div>
</body>
</html>
